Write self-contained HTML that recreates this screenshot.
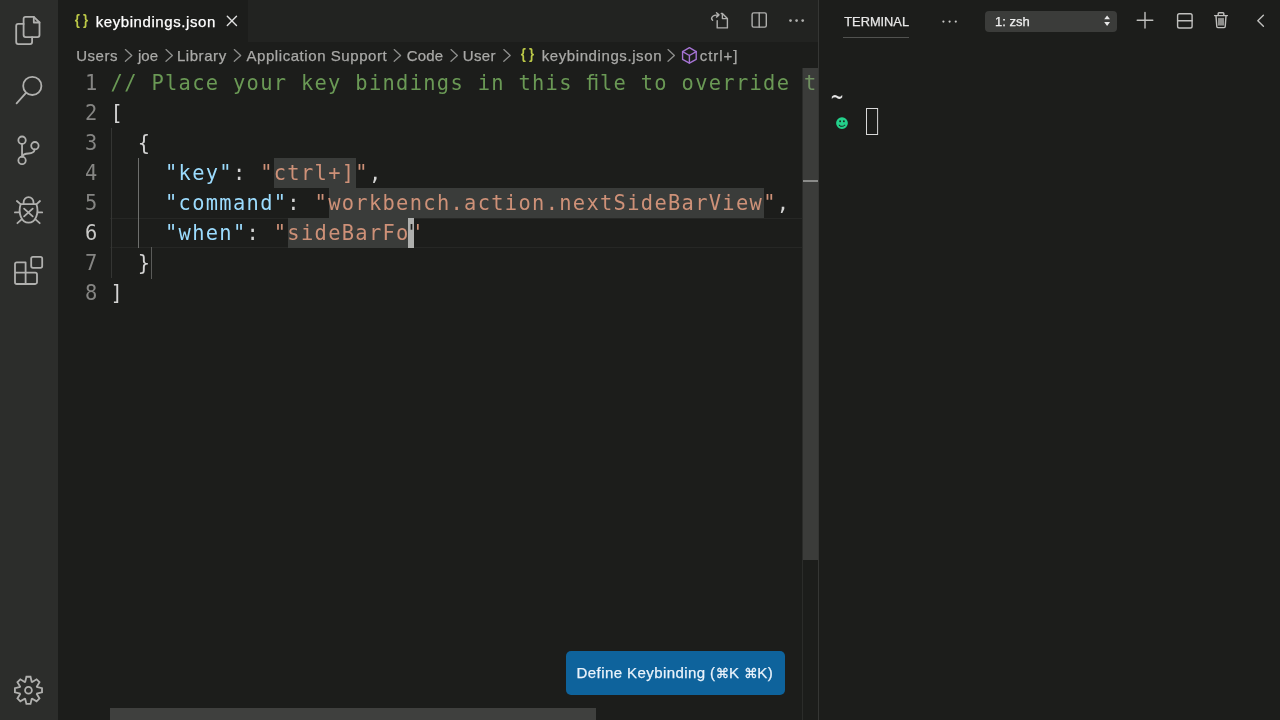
<!DOCTYPE html>
<html lang="en">
<head>
<meta charset="utf-8">
<title>keybindings.json</title>
<style>
*{box-sizing:border-box;margin:0;padding:0}
html,body{width:1280px;height:720px;overflow:hidden;background:#1c1d1b}
body{position:relative;font-family:"Liberation Sans",sans-serif;color:#ccc}
.abs{position:absolute}
#root{position:absolute;left:0;top:0;width:1280px;height:720px;will-change:transform}
svg{position:absolute;left:0;top:0;overflow:visible}
#activity{left:0;top:0;width:58px;height:720px;background:#2c2d2b}
#tabbar{left:58px;top:0;width:760px;height:42px;background:#222321}
#tab{left:58px;top:0;width:190px;height:42px;background:#1c1d1b}
.ui{position:absolute;white-space:nowrap;-webkit-text-stroke:0.25px;font-size:15px;line-height:20px;height:20px}
.bc{color:#a9a9a7;top:45.7px}
#tabname{left:95.7px;top:11.7px;color:#fff;letter-spacing:0.58px}
.br{position:absolute;font-family:"Liberation Sans",sans-serif;font-weight:bold;color:#bdca48;white-space:nowrap;font-size:13.2px;line-height:20px;letter-spacing:3.1px;transform:scaleY(1.12)}
.ln{position:absolute;left:47.2px;width:50px;text-align:right;font-family:"DejaVu Sans Mono",monospace;font-size:20.4px;line-height:30px;height:30px;color:#858583;white-space:pre}
.ln.cur{color:#c8c8c6}
.cl{position:absolute;left:110.6px;font-family:"DejaVu Sans Mono",monospace;font-size:20.4px;line-height:30px;height:30px;color:#d4d4d4;white-space:pre;letter-spacing:1.318px}
.c{color:#6a9955;font-feature-settings:"dlig" 1;font-variant-ligatures:discretionary-ligatures}.k{color:#9cdcfe}.s{color:#ce9178}
.cq{display:inline-block;clip-path:inset(0 0 0 7px)}
.sel{position:absolute;background:#3a3c3a;height:30px}
.cmd{font-family:"DejaVu Sans",sans-serif;font-size:13.6px;letter-spacing:-0.2px}
.term{position:absolute;font-family:"DejaVu Sans Mono",monospace;font-size:20px;line-height:27px;color:#e5e5e5;white-space:pre}
</style>
</head>
<body>
<div id="root">
<div id="activity" class="abs"></div>
<div id="tabbar" class="abs"></div>
<div id="tab" class="abs"></div>
<div class="abs" style="left:110px;top:217.5px;width:692px;height:30px;border-top:1px solid #262725;border-bottom:1px solid #262725"></div>
<div class="sel" style="left:274.20px;top:157.5px;width:81.60px"></div>
<div class="sel" style="left:328.60px;top:187.5px;width:435.20px"></div>
<div class="sel" style="left:287.80px;top:217.5px;width:122.40px"></div>
<div class="abs" style="left:110.5px;top:127.5px;width:1px;height:150px;background:#343533"></div>
<div class="abs" style="left:138px;top:157.5px;width:1px;height:90px;background:#6e6f6d"></div>
<div class="abs" style="left:150.5px;top:247.0px;width:1px;height:31.5px;background:#5a5b59"></div>
<div class="abs" style="left:0;top:0;width:818px;height:720px;overflow:hidden">
<div class="ln" style="top:67.5px">1</div>
<div class="cl" style="top:67.5px"><span class="c">// Place your key bindings in this file to override t</span></div>
<div class="ln" style="top:97.5px">2</div>
<div class="cl" style="top:97.5px">[</div>
<div class="ln" style="top:127.5px">3</div>
<div class="cl" style="top:127.5px">  {</div>
<div class="ln" style="top:157.5px">4</div>
<div class="cl" style="top:157.5px">    <span class="k">"key"</span>: <span class="s">"ctrl+]"</span>,</div>
<div class="ln" style="top:187.5px">5</div>
<div class="cl" style="top:187.5px">    <span class="k">"command"</span>: <span class="s">"workbench.action.nextSideBarView"</span>,</div>
<div class="ln cur" style="top:217.5px">6</div>
<div class="cl" style="top:217.5px">    <span class="k">"when"</span>: <span class="s">"sideBarFo<span class="cq">"</span></span></div>
<div class="ln" style="top:247.5px">7</div>
<div class="cl" style="top:247.5px">  }</div>
<div class="ln" style="top:277.5px">8</div>
<div class="cl" style="top:277.5px">]</div>
<div class="abs" style="left:407.8px;top:217.5px;width:6.5px;height:30px;background:#aeafad;overflow:hidden"><div class="cl" style="left:-0.6px;top:0;color:#1c1d1b">"</div></div>
</div>
<div class="br" style="left:74.8px;top:10.8px">{}</div>
<div id="tabname" class="ui">keybindings.json</div>
<div class="ui bc" style="left:76.2px;letter-spacing:0.525px">Users</div>
<div class="ui bc" style="left:138.0px;letter-spacing:0.0px">joe</div>
<div class="ui bc" style="left:176.9px;letter-spacing:0.567px">Library</div>
<div class="ui bc" style="left:246.5px;letter-spacing:0.561px">Application Support</div>
<div class="ui bc" style="left:406.7px;letter-spacing:0.167px">Code</div>
<div class="ui bc" style="left:462.7px;letter-spacing:0.367px">User</div>
<div class="ui bc" style="left:541.7px;letter-spacing:0.593px">keybindings.json</div>
<div class="ui bc" style="left:699.8px;letter-spacing:0.92px">ctrl+]</div>
<div class="br" style="left:520.8px;top:45px">{}</div>
<div class="abs" style="left:802px;top:68px;width:16px;height:652px;border-left:1px solid #2b2c2a"></div>
<div class="abs" style="left:803px;top:68px;width:15px;height:492px;background:rgba(125,126,124,0.32)"></div>
<div class="abs" style="left:803px;top:180px;width:15px;height:2px;background:#8a8b89"></div>
<div class="abs" style="left:110px;top:708px;width:486px;height:12px;background:#3f403e"></div>
<div class="abs" style="left:818px;top:0;width:1px;height:720px;background:#353634"></div>
<div class="abs" style="left:566px;top:651px;width:219px;height:44px;border-radius:5px;background:#0e639c"></div>
<div class="ui" style="left:576.6px;top:662.7px;color:#eaf3fb;letter-spacing:0.42px">Define Keybinding (<span class="cmd">⌘</span>K <span class="cmd">⌘</span>K)</div>
<div class="ui" style="left:844.3px;top:11.5px;font-size:12.8px;color:#e7e7e7">TERMINAL</div>
<div class="abs" style="left:843px;top:37px;width:66px;height:1px;background:#515250"></div>
<div class="abs" style="left:985px;top:10.5px;width:132px;height:21.5px;border-radius:4px;background:#3b3c3a"></div>
<div class="ui" style="left:995px;top:11.5px;font-size:13px;color:#f0f0f0">1: zsh</div>
<div class="term" style="left:831px;top:83.2px;transform:scaleY(1.35);transform-origin:50% 50%">~</div>
<div class="term" style="left:834.9px;top:110.2px;color:#23d18b;font-family:'DejaVu Sans',sans-serif;font-size:13.4px">☻</div>
<svg width="1280" height="720" viewBox="0 0 1280 720" fill="none" stroke-linecap="round" stroke-linejoin="round">
<g stroke="#b0b0ae" stroke-width="1.8">
<path d="M33.8 16.8 H25.6 a2 2 0 0 0 -2 2 V35.1 a2 2 0 0 0 2 2 H37.5 a2 2 0 0 0 2 -2 V22.5 Z"/>
<path d="M33.8 16.8 V22.5 H39.5"/>
<path d="M23.6 23.9 H18.2 a2 2 0 0 0 -2 2 V42.1 a2 2 0 0 0 2 2 H30.1 a2 2 0 0 0 2 -2 V37.1"/>
<circle cx="32.3" cy="85.9" r="9.1"/><path d="M26 92.8 L16.6 103.3"/>
<circle cx="22.05" cy="140.2" r="3.7"/><circle cx="34.9" cy="145.7" r="3.7"/><circle cx="22.05" cy="160.4" r="3.7"/>
<path d="M22.05 143.9 V156.7"/><path d="M34.7 149.4 C34.2 152.6 31.5 153.4 28.5 153.5 C25 153.6 22.8 154.6 22.1 156.7"/>
<path d="M23.6 204.2 V202.2 a4.95 5.1 0 0 1 9.9 0 V204.2"/>
<path d="M20.7 204.2 H36.4 C37.6 207.5 37.7 213 36.3 216.6 C34.8 220.4 31.8 222.7 28.55 222.7 C25.3 222.7 22.3 220.4 20.8 216.6 C19.4 213 19.5 207.5 20.7 204.2 Z"/>
<path d="M16.9 201 L20.5 204.2 M40 201 L36.6 204.2 M14.9 212.4 H19.5 M37.7 212.4 H42.2 M17.4 223.2 L21.6 219.4 M39.7 223.2 L35.5 219.4"/>
<path d="M24.1 208.6 L32.7 216.3 M32.7 208.6 L24.1 216.3"/>
<rect x="31.2" y="256.8" width="11" height="11.1" rx="1.8"/>
<path d="M25.6 262.3 H16.8 a1.8 1.8 0 0 0 -1.8 1.8 V282.2 a1.8 1.8 0 0 0 1.8 1.8 H35.2 a1.8 1.8 0 0 0 1.8 -1.8 V274.4 a1.8 1.8 0 0 0 -1.8 -1.8 H25.6 Z M15 272.6 H25.6 V284"/>
<path d="M25.09 682.17 L26.41 676.75 L30.51 676.75 L31.83 682.17 L36.59 679.27 L39.49 682.17 L36.59 686.93 L42.01 688.25 L42.01 692.35 L36.59 693.67 L39.49 698.43 L36.59 701.33 L31.83 698.43 L30.51 703.85 L26.41 703.85 L25.09 698.43 L20.33 701.33 L17.43 698.43 L20.33 693.67 L14.91 692.35 L14.91 688.25 L20.33 686.93 L17.43 682.17 L20.33 679.27Z" stroke-linejoin="miter" stroke-miterlimit="1.5"/><circle cx="28.46" cy="690.3" r="3.4"/>
</g>
<path d="M227.3 16.3 L236.5 25.5 M236.5 16.3 L227.3 25.5" stroke="#e0e0e0" stroke-width="1.4"/>
<g stroke="#8d8e8c" stroke-width="1.3">
<path d="M125.4 49.6 L131.8 55.4 L125.4 61.2"/>
<path d="M166 49.6 L172.4 55.4 L166 61.2"/>
<path d="M234.3 49.6 L240.70000000000002 55.4 L234.3 61.2"/>
<path d="M394.2 49.6 L400.59999999999997 55.4 L394.2 61.2"/>
<path d="M451 49.6 L457.4 55.4 L451 61.2"/>
<path d="M503.8 49.6 L510.2 55.4 L503.8 61.2"/>
<path d="M668 49.6 L674.4 55.4 L668 61.2"/>
</g>
<g stroke="#a674d4" stroke-width="1.4"><path d="M689.4 47.7 L696.2 51.6 V59.4 L689.4 63.1 L682.6 59.4 V51.6 Z"/><path d="M682.6 51.6 L689.4 55.5 L696.2 51.6 M689.4 55.5 V63.1"/></g>
<g stroke="#b0b0ae" stroke-width="1.4">
<path d="M717.2 20.6 V27.9 H727.4 V18.6 L722.4 13.5 H721.3"/><path d="M722.4 13.6 V18.6 H727.3"/>
<path d="M712.6 20.2 C710.6 18.5 711.6 14.8 718.8 14.9 M716.5 12.7 L719 14.9 L716.5 17.1"/>
<rect x="752.1" y="12.9" width="14.2" height="14.2" rx="1.6"/><path d="M759.2 12.9 V27.1"/>
</g>
<g fill="#b0b0ae"><circle cx="790.5" cy="20.6" r="1.35"/><circle cx="796.6" cy="20.6" r="1.35"/><circle cx="802.7" cy="20.6" r="1.35"/></g>
<g fill="#c8c8c6"><circle cx="943.4" cy="21.6" r="1.1"/><circle cx="949.6" cy="21.6" r="1.1"/><circle cx="955.8" cy="21.6" r="1.1"/></g>
<path d="M1107.1 15.4 L1110 19.2 H1104.2 Z M1107.1 25.9 L1110 22.1 H1104.2 Z" fill="#e8e8e8"/>
<g stroke="#c0c0be" stroke-width="1.4">
<path d="M1145 12.4 V28 M1137.2 20.2 H1152.8"/>
<rect x="1177.6" y="13.8" width="14.5" height="14.2" rx="1.8"/><path d="M1177.6 20.7 H1192.1"/>
<path d="M1214.6 15.6 H1227.4 M1218.2 15.4 V13.6 a0.8 0.8 0 0 1 0.8 -0.8 H1223 a0.8 0.8 0 0 1 0.8 0.8 V15.4 M1216 15.8 L1216.8 26.6 a1 1 0 0 0 1 1 H1224.2 a1 1 0 0 0 1 -1 L1226 15.8 M1219 18.5 V25 M1221 18.5 V25 M1223 18.5 V25"/>
<path d="M1263.4 15.2 L1257.8 20.7 L1263.4 26.2"/>
</g>
<rect x="866.5" y="108.5" width="11.1" height="26" stroke="#d8d8d8" stroke-width="1" stroke-linejoin="miter"/>
</svg>
</div>
</body>
</html>
